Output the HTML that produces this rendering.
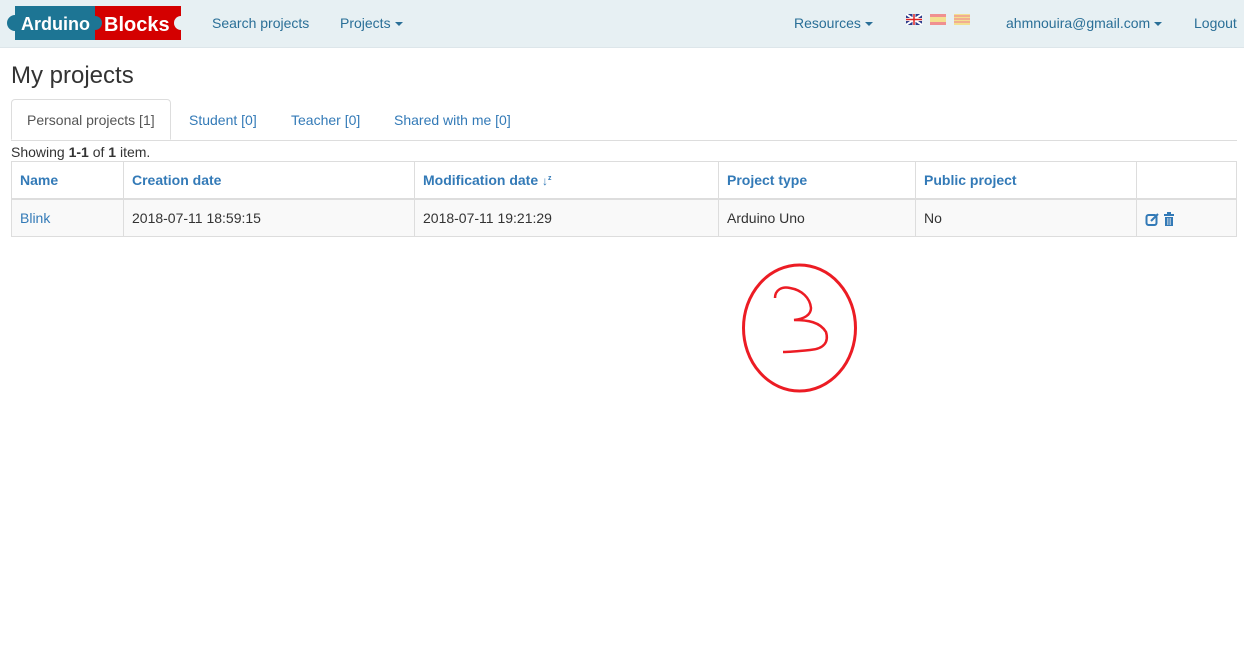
<!DOCTYPE html>
<html><head><meta charset="utf-8"><style>
body{margin:0;font-family:"Liberation Sans",sans-serif;font-size:14px;color:#333;background:#fff;width:1244px;height:662px;overflow:hidden;position:relative}
.nav{position:absolute;left:0;top:0;width:1244px;height:47px;background:#e7f0f3;border-bottom:1px solid #dde6ea}
.nav a{position:absolute;top:15px;color:#2a6f97;font-size:14px;text-decoration:none}
.caret{display:inline-block;border-top:4px solid #2a6f97;border-left:4px solid transparent;border-right:4px solid transparent;vertical-align:middle;margin-left:4px}
h1{position:absolute;left:11px;top:62px;margin:0;font-size:24px;font-weight:normal;color:#333}
.tabs{position:absolute;left:11px;top:99px;width:1226px;height:41px;border-bottom:1px solid #ddd}
.tab{position:absolute;top:13px;color:#337ab7}
.tab.act{top:0;height:41px;border:1px solid #ddd;border-bottom:1px solid #fff;border-radius:4px 4px 0 0;background:#fff;color:#555;line-height:41px;padding:0 15px;box-sizing:border-box}
.sum{position:absolute;left:11px;top:144px;font-size:14px}
table{position:absolute;left:11px;top:161px;width:1226px;border-collapse:collapse}
td,th{border:1px solid #ddd;padding:0 8px;text-align:left;height:36px;font-size:14px}
th{color:#337ab7;font-weight:bold;border-bottom:2px solid #ddd}
tr.r td{background:#f9f9f9;height:36px}
</style></head><body>
<div class="nav">
<svg style="position:absolute;left:3px;top:6px" width="180" height="35" viewBox="0 0 180 35">
<rect x="12" y="0" width="80" height="34" fill="#1d7594"/>
<circle cx="12" cy="17" r="8" fill="#1d7594"/>
<rect x="92" y="0" width="86" height="34" fill="#d40000"/>
<circle cx="92" cy="17" r="7" fill="#1d7594"/>
<circle cx="178" cy="17" r="7" fill="#e7f0f3"/>
<text x="18" y="24" font-family="Liberation Sans" font-size="18" fill="#fff" font-weight="bold">Arduino</text>
<text x="101" y="25" font-family="Liberation Sans" font-size="20" fill="#fff" font-weight="bold">Blocks</text>
</svg>
<a style="left:212px">Search projects</a>
<a style="left:340px">Projects<span class="caret"></span></a>
<a style="left:794px">Resources<span class="caret"></span></a>
<svg style="position:absolute;left:906px;top:14px" width="66" height="11">
<rect x="0" y="0" width="16" height="11" fill="#2c3c8c"/><path d="M0 0L16 11M16 0L0 11" stroke="#fff" stroke-width="2"/><path d="M8 0V11M0 5.5H16" stroke="#fff" stroke-width="3"/><path d="M8 0V11M0 5.5H16" stroke="#d22" stroke-width="1.5"/>
<rect x="24" y="0" width="16" height="11" fill="#f09090"/><rect x="24" y="3" width="16" height="5" fill="#f3e090"/>
<rect x="48" y="0" width="16" height="11" fill="#f3e090"/><path d="M48 2H64M48 5H64M48 8H64" stroke="#f09090" stroke-width="1.2"/>
</svg>
<a style="left:1006px">ahmnouira@gmail.com<span class="caret"></span></a>
<a style="left:1194px">Logout</a>
</div>
<h1>My projects</h1>
<div class="tabs">
<div class="tab act" style="left:0;width:160px">Personal projects [1]</div>
<div class="tab" style="left:178px">Student [0]</div>
<div class="tab" style="left:280px">Teacher [0]</div>
<div class="tab" style="left:383px">Shared with me [0]</div>
</div>
<div class="sum">Showing <b>1-1</b> of <b>1</b> item.</div>
<table>
<tr><th style="width:95px">Name</th><th style="width:274px">Creation date</th><th style="width:287px">Modification date <span style="font-size:12px">↓<sup style="font-size:7px">z</sup></span></th><th style="width:180px">Project type</th><th style="width:204px">Public project</th><th></th></tr>
<tr class="r"><td style="color:#337ab7">Blink</td><td>2018-07-11 18:59:15</td><td>2018-07-11 19:21:29</td><td>Arduino Uno</td><td>No</td><td>
<svg width="32" height="16" style="vertical-align:middle"><rect x="1.5" y="4" width="10" height="10" rx="2" fill="none" stroke="#337ab7" stroke-width="2"/><path d="M6 10L13 3" stroke="#337ab7" stroke-width="2"/><rect x="19" y="3" width="10" height="2" fill="#337ab7"/><rect x="22" y="1" width="4" height="2" fill="#337ab7"/><rect x="20" y="6" width="8" height="9" fill="#337ab7"/><path d="M22.5 7V14M24 7V14M25.5 7V14" stroke="#bcd" stroke-width="0.8"/></svg></td></tr>
</table>
<svg style="position:absolute;left:0;top:0" width="1244" height="662">
<ellipse cx="799.5" cy="328" rx="56" ry="63" fill="none" stroke="#ec1c24" stroke-width="3"/>
<path d="M775 298C775 290 782 286 790 288C802 290 810 298 811 308C811 315 804 319 794 320C808 320 820 322 826 332C829 342 824 349 810 350C800 351 790 352 783 352" fill="none" stroke="#ec1c24" stroke-width="2.5"/>
</svg>
</body></html>
